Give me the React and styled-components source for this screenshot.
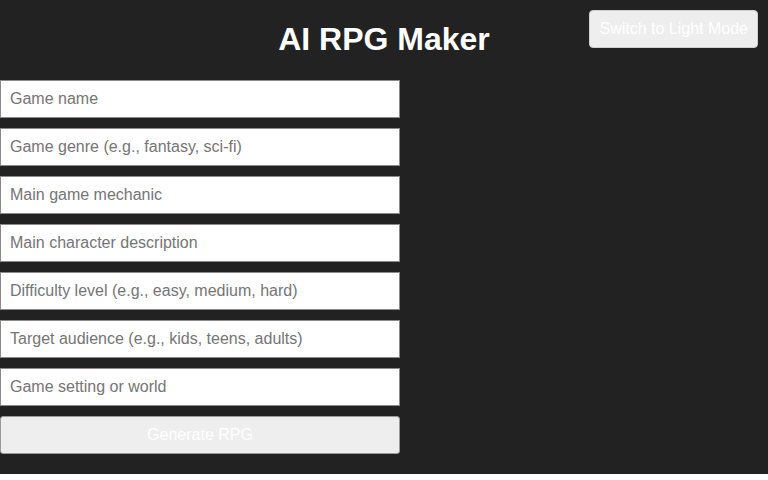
import React, { useState } from 'react';
import styled, { createGlobalStyle } from 'styled-components';

const fields = [
    'Game name',
    'Game genre (e.g., fantasy, sci-fi)',
    'Main game mechanic',
    'Main character description',
    'Difficulty level (e.g., easy, medium, hard)',
    'Target audience (e.g., kids, teens, adults)',
    'Game setting or world',
];

export default function App(){
    const [values, setValues] = useState(fields.map(() => ''));

    function update(i, v){
        const next = [...values];
        next[i] = v;
        setValues(next);
    }

    return(
        <>
            <GlobalStyle/>
            <Page>
                <ModeButton type='button'>Switch to Light Mode</ModeButton>
                <Title>AI RPG Maker</Title>
                <Form onSubmit={e => e.preventDefault()}>
                    {fields.map((f, i) => (
                        <Input
                        key={f}
                        type='text'
                        placeholder={f}
                        value={values[i]}
                        onChange={e => update(i, e.target.value)}/>
                    ))}
                    <SubmitButton type='submit' disabled>Generate RPG</SubmitButton>
                </Form>
            </Page>
        </>
    )
}

const GlobalStyle = createGlobalStyle`
    body{
        margin: 0;
        background: #fff;
        font-family: "Liberation Sans", Arial, sans-serif;
    }
`;

const Page = styled.div`
    position: relative;
    display: flow-root;
    background: #222222;
    color: #fff;
    padding-bottom: 20px;
`;

const Title = styled.h1`
    margin: 21.44px 0;
    font-size: 32px;
    font-weight: 700;
    text-align: center;
`;

const ModeButton = styled.button`
    position: absolute;
    top: 10px;
    right: 10px;
    padding: 9px 9px;
    font-family: "Liberation Sans", Arial, sans-serif;
    font-size: 16px;
    line-height: 18px;
    color: #fff;
    background: #eeeeee;
    border: 1px solid #cfcfcf;
    border-radius: 4px;
`;

const Form = styled.form`
    display: flex;
    flex-direction: column;
    width: 400px;
`;

const Input = styled.input`
    box-sizing: border-box;
    width: 100%;
    height: 38px;
    margin-bottom: 10px;
    padding: 9px;
    font-family: "Liberation Sans", Arial, sans-serif;
    font-size: 16px;
    color: #000;
    background: #fff;
    border: 1px solid #8a8a8a;
    border-radius: 0;
    &::placeholder{
        color: #757575;
    }
`;

const SubmitButton = styled.button`
    box-sizing: border-box;
    width: 100%;
    height: 38px;
    padding: 9px;
    font-family: "Liberation Sans", Arial, sans-serif;
    font-size: 16px;
    color: #fff;
    background: #eeeeee;
    border: 1px solid #9a9a9a;
    border-radius: 3px;
`;
